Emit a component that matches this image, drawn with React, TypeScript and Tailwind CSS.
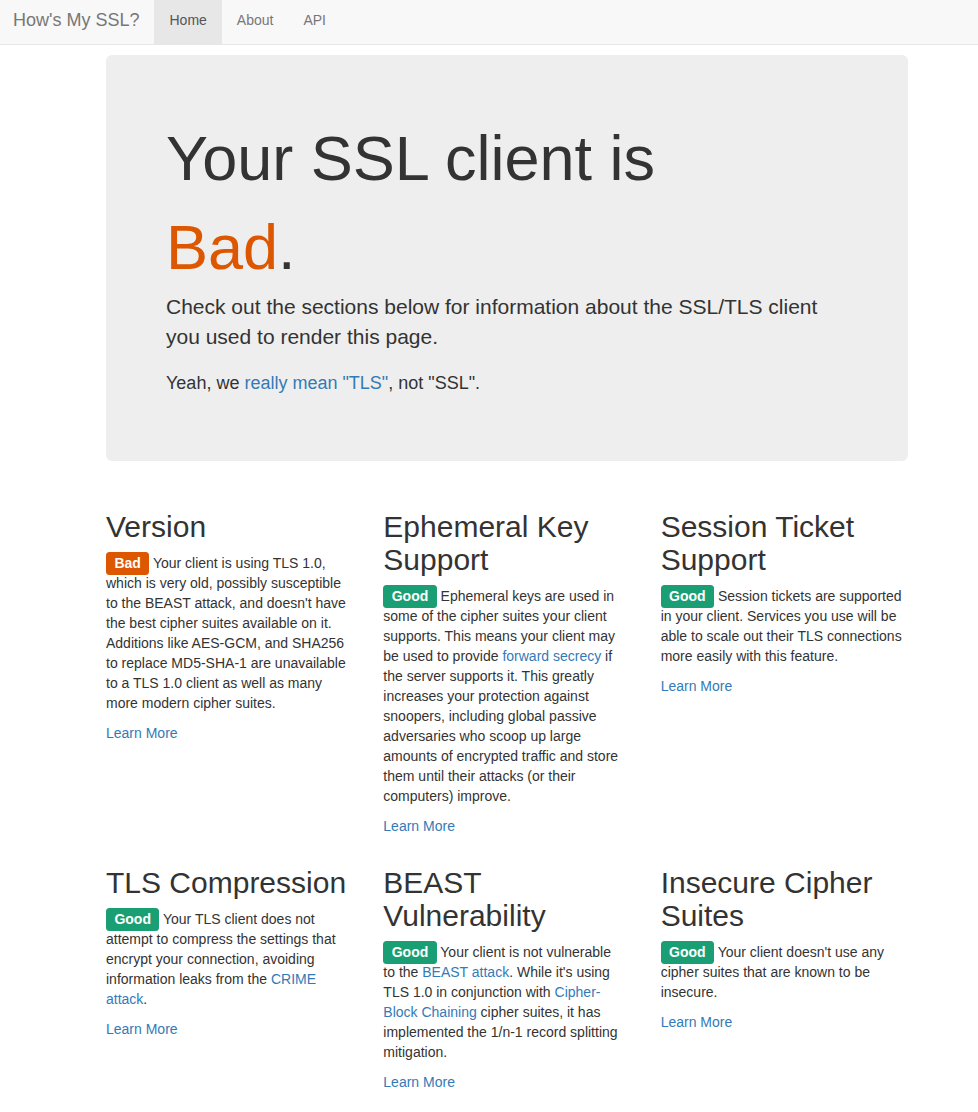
import React from 'react';

type Rating = 'Good' | 'Bad';

function Label({ rating }: { rating: Rating }) {
  const color = rating === 'Bad' ? 'bg-[#dd5600]' : 'bg-[#1a9f74]';
  return (
    <span
      className={`${color} inline rounded-[3.5px] px-[0.6em] pt-[0.2em] pb-[0.3em] text-[14px] font-bold leading-none text-white`}
    >
      {rating}
    </span>
  );
}

function A({ children }: { children: React.ReactNode }) {
  return (
    <a href="#" className="text-[#337ab7]">
      {children}
    </a>
  );
}

interface SectionProps {
  title: React.ReactNode;
  rating: Rating;
  narrow?: boolean;
  children: React.ReactNode;
}

function Section({ title, rating, narrow, children }: SectionProps) {
  return (
    <div>
      <h2 className="mt-[20px] mb-[10px] text-[30px] leading-[33px] font-normal text-[#333]">{title}</h2>
      <p className={`mb-[10px] text-[14px] leading-[20px] text-[#333] ${narrow ? 'pr-[6px]' : ''}`}>
        <Label rating={rating} /> {children}
      </p>
      <p className="mb-[10px] text-[14px] leading-[20px]">
        <A>Learn More</A>
      </p>
    </div>
  );
}

export default function App() {
  return (
    <div className="min-h-screen bg-white font-['Liberation_Sans',Arial,sans-serif] text-[14px] text-[#333]">
      {/* Navbar */}
      <nav className="flex h-[45px] border-b border-[#e7e7e7] bg-[#f8f8f8]">
        <a href="#" className="flex h-[44px] items-center pl-[13px] pr-[15px] pb-[4px] text-[18px] text-[#777]">
          How's My SSL?
        </a>
        <a href="#" className="flex h-[44px] items-center bg-[#e7e7e7] px-[15px] pb-[4px] text-[#555]">
          Home
        </a>
        <a href="#" className="flex h-[44px] items-center px-[15px] pb-[4px] text-[#777]">
          About
        </a>
        <a href="#" className="flex h-[44px] items-center px-[15px] pb-[4px] text-[#777]">
          API
        </a>
      </nav>

      <div className="ml-[106px] w-[802px]">
        {/* Jumbotron */}
        <div className="mt-[10px] rounded-[6px] bg-[#eee] px-[60px] pt-[59px] pb-[65px]">
          <h1 className="text-[63px] leading-[89px] font-normal text-[#333]">
            Your SSL client is
            <br />
            <span className="text-[#dd5600]">Bad</span>.
          </h1>
          <p className="mb-[18px] text-[21px] leading-[30px]">
            Check out the sections below for information about the SSL/TLS client you used to render this page.
          </p>
          <p className="text-[18px] leading-[26px]">
            Yeah, we <A>really mean "TLS"</A>, not "SSL".
          </p>
        </div>

        {/* Sections */}
        <div className="mt-[29px] grid grid-cols-3 gap-x-[30px]">
          <Section title="Version" rating="Bad">
            Your client is using TLS 1.0, which is very old, possibly susceptible to the BEAST attack, and doesn't have
            the best cipher suites available on it. Additions like AES-GCM, and SHA256 to replace MD5-SHA-1 are
            unavailable to a TLS 1.0 client as well as many more modern cipher suites.
          </Section>
          <Section title="Ephemeral Key Support" rating="Good">
            Ephemeral keys are used in some of the cipher suites your client supports. This means your client may be
            used to provide <A>forward secrecy</A> if the server supports it. This greatly increases your protection
            against snoopers, including global passive adversaries who scoop up large amounts of encrypted traffic and
            store them until their attacks (or their computers) improve.
          </Section>
          <Section title="Session Ticket Support" rating="Good">
            Session tickets are supported in your client. Services you use will be able to scale out their TLS
            connections more easily with this feature.
          </Section>
          <Section title="TLS Compression" rating="Good">
            Your TLS client does not attempt to compress the settings that encrypt your connection, avoiding
            information leaks from the <A>CRIME attack</A>.
          </Section>
          <Section title="BEAST Vulnerability" rating="Good" narrow>
            Your client is not vulnerable to the <A>BEAST attack</A>. While it's using TLS 1.0 in conjunction with{' '}
            <A>Cipher-Block Chaining</A> cipher suites, it has implemented the 1/n-1 record splitting mitigation.
          </Section>
          <Section title="Insecure Cipher Suites" rating="Good">
            Your client doesn't use any cipher suites that are known to be insecure.
          </Section>
        </div>
      </div>
    </div>
  );
}
